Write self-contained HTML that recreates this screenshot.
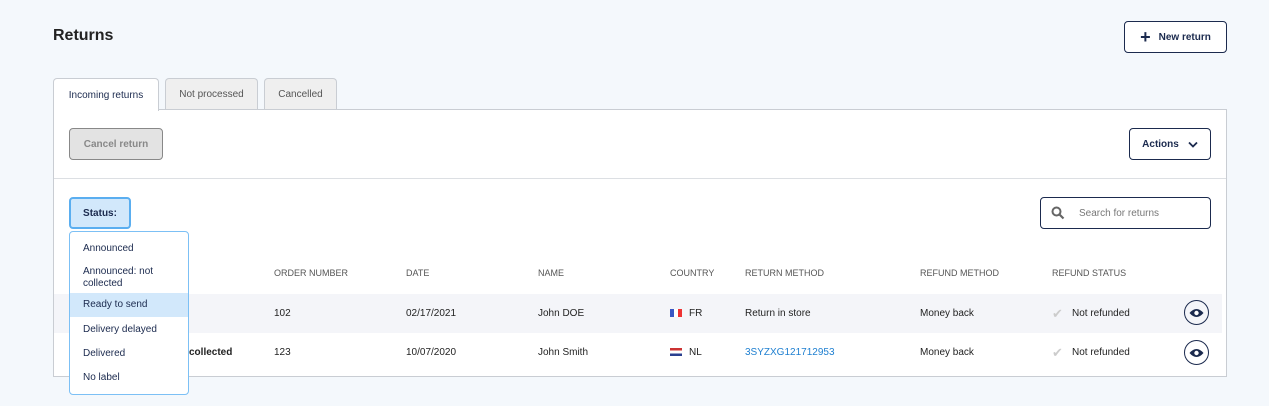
<!DOCTYPE html>
<html><head><style>
*{box-sizing:border-box;margin:0;padding:0}
body{width:1269px;height:406px;background:#f4f8fc;font-family:"Liberation Sans",sans-serif;color:#1b2a4e;position:relative;overflow:hidden;font-size:10px}
.a{position:absolute;white-space:nowrap}
.btn{position:absolute;border:1px solid #1b2a4e;border-radius:4px;background:#fff;font-weight:bold;font-size:10px;display:flex;align-items:center;justify-content:center}
.tab{position:absolute;top:78px;height:32px;border:1px solid #c9cdd3;border-bottom:none;border-radius:4px 4px 0 0;background:#efefef;color:#555;font-size:10px;display:flex;align-items:center;justify-content:center}
.th{position:absolute;top:268px;font-size:9px;color:#555}
.td{position:absolute;font-size:10px;color:#222}
.eye{position:absolute;left:1184px;width:25px;height:25px;border:1.5px solid #1b2a4e;border-radius:50%;display:flex;align-items:center;justify-content:center}
.dd{position:absolute;left:69px;width:120px;font-size:10px;color:#1b2a4e;padding-left:14px}
</style></head><body>
<div class="a" style="left:53px;top:27px;font-size:16px;font-weight:bold;color:#222">Returns</div>
<div class="btn" style="left:1124px;top:21px;width:103px;height:32px"><span style="font-size:18px;margin-right:8px;line-height:1">+</span>New return</div>
<div class="tab" style="left:53px;width:106px;background:#fff;color:#1b2a4e;height:33px;z-index:2">Incoming returns</div>
<div class="tab" style="left:165px;width:93px">Not processed</div>
<div class="tab" style="left:264px;width:73px">Cancelled</div>
<div style="position:absolute;left:53px;top:109px;width:1174px;height:268px;background:#fff;border:1px solid #c9cdd3"></div>
<div style="position:absolute;left:54px;top:178px;width:1172px;height:1px;background:#dcdfe3"></div>
<div class="btn" style="left:69px;top:128px;width:94px;height:32px;background:#e3e3e3;border-color:#888;color:#888">Cancel return</div>
<div class="btn" style="left:1129px;top:128px;width:82px;height:32px">Actions <svg style="margin-left:9px" width="10" height="7" viewBox="0 0 10 7"><path d="M1 1.5L5 5.5L9 1.5" fill="none" stroke="#1b2a4e" stroke-width="1.8"/></svg></div>
<div class="btn" style="left:69px;top:197px;width:62px;height:32px;background:#d2e8fb;border:2px solid #5aaef0">Status:</div>
<div class="btn" style="left:1040px;top:197px;width:171px;height:32px;justify-content:flex-start;font-weight:normal;color:#777">
<svg style="margin:0 14px 0 10px" width="14" height="14" viewBox="0 0 14 14"><circle cx="5.5" cy="5.5" r="4" fill="none" stroke="#666" stroke-width="2"/><path d="M8.5 8.5L12.5 12.5" stroke="#666" stroke-width="2.2"/></svg>Search for returns</div>
<div class="th" style="left:274px">ORDER NUMBER</div>
<div class="th" style="left:406px">DATE</div>
<div class="th" style="left:538px">NAME</div>
<div class="th" style="left:670px">COUNTRY</div>
<div class="th" style="left:745px">RETURN METHOD</div>
<div class="th" style="left:920px">REFUND METHOD</div>
<div class="th" style="left:1052px">REFUND STATUS</div>
<div style="position:absolute;left:54px;top:294px;width:1168px;height:39px;background:#f4f5f9"></div>
<div class="td" style="top:308px;left:274px">102</div>
<div class="td" style="top:308px;left:406px">02/17/2021</div>
<div class="td" style="top:308px;left:538px">John DOE</div>
<div class="a" style="top:309px;left:670px;width:12px;height:8px;background:linear-gradient(90deg,#3a57c4 33%,#fff 33% 66%,#e33 66%)"></div>
<div class="td" style="top:308px;left:689px">FR</div>
<div class="td" style="top:308px;left:745px">Return in store</div>
<div class="td" style="top:308px;left:920px">Money back</div>
<div class="td" style="top:306px;left:1052px;color:#ccc;font-size:13px">&#10004;</div>
<div class="td" style="top:308px;left:1072px">Not refunded</div>
<div class="eye" style="top:300px"><svg width="15" height="10" viewBox="0 0 15 10"><path d="M0.5 5Q7.5-3 14.5 5Q7.5 13 0.5 5Z" fill="#1b2a4e"/><circle cx="7.5" cy="5" r="2.2" fill="#fff"/></svg></div>
<div class="td" style="top:347px;left:189px;font-weight:bold">collected</div>
<div class="td" style="top:347px;left:274px">123</div>
<div class="td" style="top:347px;left:406px">10/07/2020</div>
<div class="td" style="top:347px;left:538px">John Smith</div>
<div class="a" style="top:348px;left:670px;width:12px;height:8px;background:linear-gradient(#c33 33%,#fff 33% 66%,#2a3f8f 66%)"></div>
<div class="td" style="top:347px;left:689px">NL</div>
<div class="td" style="top:347px;left:745px;color:#1e7fd0">3SYZXG121712953</div>
<div class="td" style="top:347px;left:920px">Money back</div>
<div class="td" style="top:345px;left:1052px;color:#ccc;font-size:13px">&#10004;</div>
<div class="td" style="top:347px;left:1072px">Not refunded</div>
<div class="eye" style="top:340px"><svg width="15" height="10" viewBox="0 0 15 10"><path d="M0.5 5Q7.5-3 14.5 5Q7.5 13 0.5 5Z" fill="#1b2a4e"/><circle cx="7.5" cy="5" r="2.2" fill="#fff"/></svg></div>
<div style="position:absolute;left:69px;top:231px;width:120px;height:164px;background:#fff;border:1px solid #7cc0f5;border-radius:4px"></div>
<div class="dd" style="top:243px">Announced</div>
<div class="dd" style="top:266px;line-height:12px">Announced: not<br>collected</div>
<div class="dd" style="top:293px;height:24px;line-height:24px;background:#d2e8fb;left:70px;width:118px;padding-left:13px">Ready to send</div>
<div class="dd" style="top:324px">Delivery delayed</div>
<div class="dd" style="top:348px">Delivered</div>
<div class="dd" style="top:372px">No label</div>
</body></html>
